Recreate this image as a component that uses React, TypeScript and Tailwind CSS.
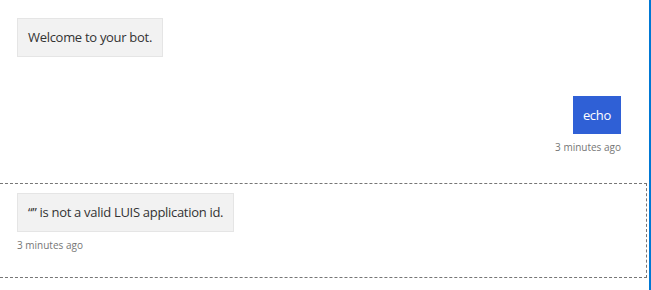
import React from "react";

function Bubble({ children }: { children: React.ReactNode }) {
  return (
    <div className="inline-block border border-[#e5e5e5] bg-[#f2f2f2] px-[10px] py-[8px] text-[13px] leading-[21px] tracking-[-0.3px] text-[#333333]">
      {children}
    </div>
  );
}

function Stamp({ children }: { children: React.ReactNode }) {
  return <div className="mt-[6px] text-[10px] leading-[14px] text-[#767676]">{children}</div>;
}

export default function App() {
  return (
    <div
      className="flex h-[290px] w-[651px] overflow-hidden bg-white"
      style={{ fontFamily: '"Segoe UI", "Open Sans", sans-serif' }}
    >
      <div className="flex flex-1 flex-col">
        {/* bot greeting */}
        <div className="pl-[17px] pt-[18px]">
          <Bubble>Welcome to your bot.</Bubble>
        </div>

        {/* user message */}
        <div className="mt-[39px] flex flex-col items-end pr-[28px]">
          <div className="bg-[#2f60d6] px-[10px] py-[8px] text-[13px] leading-[22px] tracking-[-0.3px] text-white">
            echo
          </div>
          <Stamp>3 minutes ago</Stamp>
        </div>

        {/* selected activity */}
        <div className="mr-[2px] mt-[29px] h-[95px] border-t border-r border-b border-dashed border-[#767676] pl-[17px] pt-[9px]">
          <Bubble>“” is not a valid LUIS application id.</Bubble>
          <Stamp>3 minutes ago</Stamp>
        </div>
      </div>
      <div className="w-[2px] bg-[#0078d4]" />
    </div>
  );
}
